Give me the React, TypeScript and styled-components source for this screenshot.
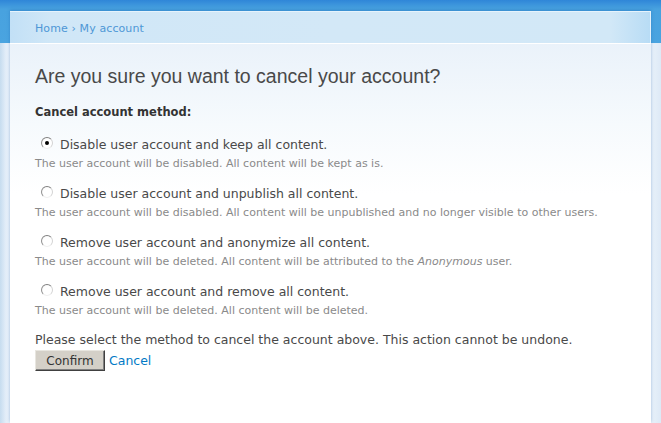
import { useState } from 'react'
import styled, { createGlobalStyle } from 'styled-components'

const GlobalStyle = createGlobalStyle`
  html, body {
    margin: 0;
    padding: 0;
    height: 100%;
  }
  body {
    background: #e9f2fa;
    font-family: "DejaVu Sans", Verdana, sans-serif;
    color: #494949;
  }
  #root {
    height: 100%;
  }
`

const options = [
  {
    id: 'block',
    label: 'Disable user account and keep all content.',
    desc: <>The user account will be disabled. All content will be kept as is.</>,
  },
  {
    id: 'unpublish',
    label: 'Disable user account and unpublish all content.',
    desc: <>The user account will be disabled. All content will be unpublished and no longer visible to other users.</>,
  },
  {
    id: 'reassign',
    label: 'Remove user account and anonymize all content.',
    desc: (
      <>
        The user account will be deleted. All content will be attributed to the <em>Anonymous</em> user.
      </>
    ),
  },
  {
    id: 'delete',
    label: 'Remove user account and remove all content.',
    desc: <>The user account will be deleted. All content will be deleted.</>,
  },
]

export default function App() {
  const [method, setMethod] = useState('block')

  return (
    <>
      <GlobalStyle />
      <Page>
        <Panel>
          <Header>
            <Crumbs>
              <a href="#">Home</a> › <a href="#">My account</a>
            </Crumbs>
          </Header>
          <Content>
            <Title>Are you sure you want to cancel your account?</Title>
            <Legend>Cancel account method:</Legend>
            <Options>
              {options.map((o) => (
                <Option key={o.id}>
                  <OptionLabel>
                    <Radio
                      type="radio"
                      name="method"
                      checked={method === o.id}
                      onChange={() => setMethod(o.id)}
                    />
                    {o.label}
                  </OptionLabel>
                  <Description>{o.desc}</Description>
                </Option>
              ))}
            </Options>
            <Warning>Please select the method to cancel the account above. This action cannot be undone.</Warning>
            <Actions>
              <ConfirmButton type="button">Confirm</ConfirmButton>
              <CancelLink href="#">Cancel</CancelLink>
            </Actions>
          </Content>
        </Panel>
      </Page>
    </>
  )
}

/* ─── Styles ─── */

const Page = styled.div`
  min-height: 100%;
  box-sizing: border-box;
  padding: 11px 10px 0;
  display: flex;
  background:
    linear-gradient(to bottom, #2f86d8 0, #48a2df 9px, #4aa4e0 43px, transparent 43px),
    linear-gradient(to right, #c6dcef 0, #e4eef9 6px, #e9f2fa 10px, #e9f2fa calc(100% - 10px), #dde9f6 100%);
`

const Panel = styled.div`
  flex: 1;
  display: flex;
  flex-direction: column;
  box-shadow: 0 -1px 3px rgba(20, 90, 170, 0.35);
`

const Header = styled.div`
  height: 31px;
  border-top: 1px solid #e6f3fc;
  border-right: 1px solid #e6f3fc;
  background: linear-gradient(
    to right,
    #c2e0f6 0,
    #d0e7f7 40px,
    #d3e8f7 50%,
    #d2e8f7 calc(100% - 40px),
    #b8dcf5 100%
  );
  display: flex;
  align-items: center;
  padding-left: 25px;
`

const Crumbs = styled.div`
  font-size: 11px;
  color: #4e97d6;
  letter-spacing: 0.1px;
  padding-top: 2px;

  a {
    color: #4e97d6;
    text-decoration: none;
  }
`

const Content = styled.div`
  flex: 1;
  border-top: 1px solid #ffffff;
  background: linear-gradient(to bottom, #eaf2fa 0, #f6fafd 80px, #ffffff 150px);
  padding: 21px 25px 30px;
`

const Title = styled.h1`
  margin: 0;
  font-family: "Liberation Sans", Arial, sans-serif;
  font-weight: normal;
  font-size: 19.5px;
  line-height: 22px;
  color: #494949;
`

const Legend = styled.div`
  margin-top: 17px;
  font-size: 11.5px;
  font-weight: bold;
  line-height: 16px;
  color: #333;
`

const Options = styled.div`
  margin-top: 16px;
  display: flex;
  flex-direction: column;
  gap: 14px;
`

const Option = styled.div`
  display: flex;
  flex-direction: column;
`

const OptionLabel = styled.label`
  display: flex;
  align-items: center;
  gap: 7px;
  padding-left: 6px;
  font-size: 12.5px;
  line-height: 18px;
  color: #494949;
  cursor: pointer;
`

const Radio = styled.input`
  appearance: none;
  margin: 0;
  width: 12px;
  height: 12px;
  border-radius: 50%;
  border: 1px solid;
  border-color: #7f7f7f #d4d4d4 #f0f0f0 #909090;
  background: radial-gradient(circle at 60% 60%, #ffffff 0, #ffffff 55%, #eeeeee 100%);
  position: relative;
  top: -2px;

  &:checked::after {
    content: '';
    position: absolute;
    left: 3px;
    top: 3px;
    width: 4px;
    height: 4px;
    border-radius: 50%;
    background: #000;
  }
`

const Description = styled.div`
  margin-top: 2px;
  font-size: 11px;
  line-height: 15px;
  color: #8a8a8a;

  em {
    font-style: italic;
  }
`

const Warning = styled.p`
  margin: 14px 0 0;
  font-size: 12.5px;
  line-height: 16px;
  color: #494949;
`

const Actions = styled.div`
  margin-top: 2px;
  display: flex;
  align-items: center;
  gap: 4px;
`

const ConfirmButton = styled.button`
  width: 70px;
  height: 21px;
  padding: 0;
  background: #d4d0c8;
  border: 1px solid;
  border-color: #e8e6e0 #404040 #404040 #e8e6e0;
  box-shadow: inset -1px -1px 0 #808080;
  font-family: "DejaVu Sans", Verdana, sans-serif;
  font-size: 12px;
  color: #333;
  cursor: pointer;
`

const CancelLink = styled.a`
  font-size: 12.5px;
  color: #027ac6;
  text-decoration: none;
`
